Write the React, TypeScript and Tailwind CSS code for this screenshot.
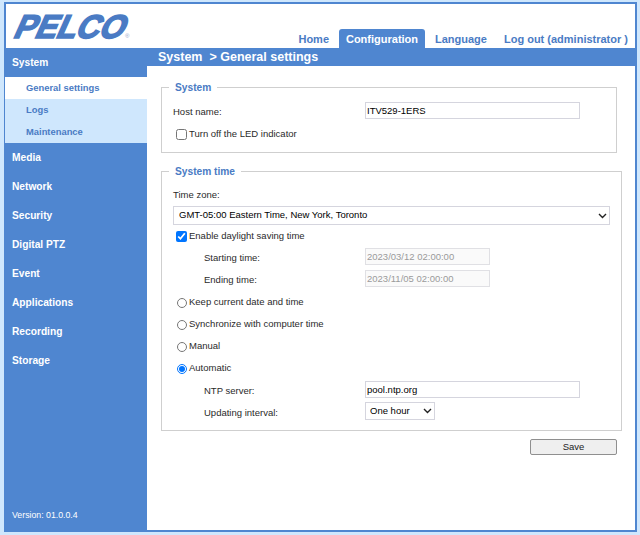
function Chevron({ className }: { className: string }) {
  return (
    <svg width="9" height="6" viewBox="0 0 9 6" className={className} fill="none" stroke="#222" strokeWidth="1.4">
      <path d="M1 1 L4.5 4.5 L8 1" />
    </svg>
  );
}

export default function App() {
  const blue = "bg-[#4f86d0]";
  const sideItem = "h-[29px] pb-[2px] pl-[7px] flex items-center text-white font-bold text-[10.2px]";
  const label = "text-[9.5px] text-[#2a2a2a]";
  const legend = "ml-[-4px] px-[6px] text-[10.2px] font-bold text-[#4a7bc4] leading-[13px]";
  const input = "h-[17px] mb-[4px] border px-[1px] text-[9.5px] outline-none";
  return (
    <div className="w-[640px] h-[535px] bg-[#cfe7fd] pt-[2px] pl-[4px] pr-[3px] pb-[3px] font-['Liberation_Sans',Arial,sans-serif] overflow-hidden">
      <div className="w-full h-full border-2 border-[#4f86d0] bg-white flex flex-col">
        {/* header */}
        <div className="h-[44px] flex items-end justify-between shrink-0 pl-[6px]">
          <svg width="124" height="34" viewBox="0 0 124 34" className="mb-[5px] overflow-visible">
            <text x="0" y="29" fontFamily="Liberation Sans" fontWeight="700" fontSize="33" textLength="110" lengthAdjust="spacingAndGlyphs" fill="#4a7bc4" stroke="#4a7bc4" strokeWidth="1.6" transform="translate(12.9 0) skewX(-24)">PELCO</text>
            <text x="113" y="29" fontFamily="Liberation Sans" fontSize="6" fill="#8fa8cc">®</text>
          </svg>
          <nav className="flex items-end text-[11px] font-bold text-[#4a7bc4] pr-[7px]">
            <span className="h-[19px] pt-[1px] flex items-center mr-[10px]">Home</span>
            <span className={`${blue} text-white h-[19px] pt-[1px] flex items-center rounded-t-[3px] w-[86px] justify-center`}>Configuration</span>
            <span className="h-[19px] pt-[1px] flex items-center ml-[10px]">Language</span>
            <span className="h-[19px] pt-[1px] flex items-center ml-[17px]">Log out (administrator )</span>
          </nav>
        </div>
        <div className="flex-1 flex border-t border-[#4f86d0] min-h-0">
          {/* sidebar */}
          <aside className={`w-[142px] shrink-0 ${blue} flex flex-col ml-[-1px] relative`}>
            <div className="h-[28px] pl-[7px] flex items-center text-white font-bold text-[10.2px]">System</div>
            <div className="bg-[#cfe7fd] text-[#4a7bc4] font-bold text-[9.4px] mb-[1px] h-[66px] flex flex-col">
              <div className="h-[22px] bg-white flex items-center pl-[21px]">General settings</div>
              <div className="h-[22px] flex items-center pl-[21px]">Logs</div>
              <div className="h-[22px] flex items-center pl-[21px]">Maintenance</div>
            </div>
            {["Media", "Network", "Security", "Digital PTZ", "Event", "Applications", "Recording", "Storage"].map((s) => (
              <div key={s} className={sideItem}>{s}</div>
            ))}
            <div className="mt-auto pl-[7px] pb-[8px] text-white text-[8.75px]">Version: 01.0.0.4</div>
          </aside>
          {/* main */}
          <main className="flex-1 flex flex-col min-w-0">
            <div className={`${blue} h-[17px] shrink-0 pl-[11px] flex items-center text-white font-bold text-[12.5px] whitespace-pre`}>System  {">"} General settings</div>
            <div className="pl-[14px] pr-[18px] pt-[15px] flex flex-col">
              <fieldset className="border border-[#cfcfcf] h-[72px] px-[11px] pb-0 pt-0 m-0">
                <legend className={legend}>System</legend>
                <div className="flex items-center h-[18px] mt-[9px]">
                  <span className={`${label} w-[192px]`}>Host name:</span>
                  <input readOnly value="ITV529-1ERS" className={`${input} w-[215px] border-[#d5d5de] text-black`} />
                </div>
                <label className="flex items-center h-[18px] mt-[4px] ml-[3px]">
                  <input type="checkbox" readOnly className="w-[11px] h-[11px] m-0 mr-[2px]" />
                  <span className={label}>Turn off the LED indicator</span>
                </label>
              </fieldset>
              <fieldset className="border border-[#cfcfcf] h-[266px] mt-[12px] px-[11px] pb-0 pt-0 m-0">
                <legend className={legend}>System time</legend>
                <div className={`${label} mt-[10px] leading-[13px]`}>Time zone:</div>
                <div className="relative mt-[5px] w-[437px]">
                  <select defaultValue="e" className="block w-full h-[19px] appearance-none border border-[#d5d5de] pl-[5px] text-[9.5px] text-black bg-white outline-none">
                    <option value="e">GMT-05:00 Eastern Time, New York, Toronto</option>
                  </select>
                  <Chevron className="absolute right-[3px] top-[7px] pointer-events-none" />
                </div>
                <label className="flex items-center h-[18px] mt-[2px] ml-[3px]">
                  <input type="checkbox" checked readOnly className="w-[11px] h-[11px] m-0 mr-[2px]" />
                  <span className={label}>Enable daylight saving time</span>
                </label>
                <div className="flex items-center h-[18px] mt-[4px] pl-[31px]">
                  <span className={`${label} w-[161px]`}>Starting time:</span>
                  <input disabled value="2023/03/12 02:00:00" className={`${input} w-[125px] border-[#e0e0e4] bg-[#fafafa] text-[#9a9a9a]`} />
                </div>
                <div className="flex items-center h-[18px] mt-[4px] pl-[31px]">
                  <span className={`${label} w-[161px]`}>Ending time:</span>
                  <input disabled value="2023/11/05 02:00:00" className={`${input} w-[125px] border-[#e0e0e4] bg-[#fafafa] text-[#9a9a9a]`} />
                </div>
                {[
                  ["Keep current date and time", false, "mt-[4px]"],
                  ["Synchronize with computer time", false, "mt-[4px]"],
                  ["Manual", false, "mt-[4px]"],
                  ["Automatic", true, "mt-[4px]"],
                ].map(([t, c, m]) => (
                  <label key={t as string} className={`flex items-center h-[18px] ${m} ml-[4px]`}>
                    <input type="radio" checked={c as boolean} readOnly className="w-[10px] h-[10px] m-0 mr-[2px] mt-[1px]" />
                    <span className={label}>{t as string}</span>
                  </label>
                ))}
                <div className="flex items-center h-[18px] mt-[5px] pl-[31px]">
                  <span className={`${label} w-[161px]`}>NTP server:</span>
                  <input readOnly value="pool.ntp.org" className={`${input} w-[215px] border-[#d5d5de] text-black`} />
                </div>
                <div className="flex items-center h-[18px] mt-[4px] pl-[31px]">
                  <span className={`${label} w-[161px]`}>Updating interval:</span>
                  <div className="relative w-[70px] h-[18px] mb-[4px]">
                    <select defaultValue="h" className="block w-full h-full appearance-none border border-[#d5d5de] pl-[4px] text-[9.5px] text-black bg-white outline-none">
                      <option value="h">One hour</option>
                    </select>
                    <Chevron className="absolute right-[3px] top-[6px] pointer-events-none" />
                  </div>
                </div>
              </fieldset>
              <div className="flex justify-end mt-[8px]">
                <button className="w-[87px] h-[16px] border border-[#8f8f8f] rounded-[2px] bg-[#efefef] text-[9.5px] text-[#222] leading-none">Save</button>
              </div>
            </div>
          </main>
        </div>
      </div>
    </div>
  );
}
